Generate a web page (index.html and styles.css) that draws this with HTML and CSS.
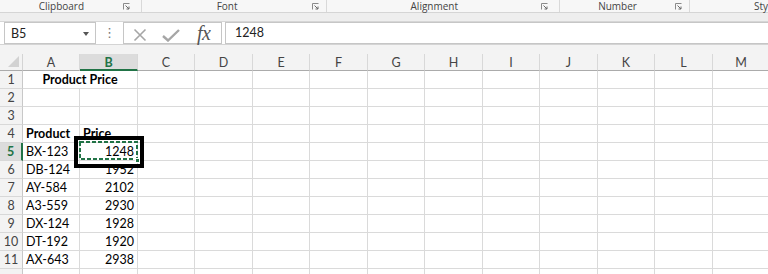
FILE: index.html
```html
<!DOCTYPE html>
<html>
<head>
<meta charset="utf-8">
<link rel="stylesheet" href="styles.css">
</head>
<body>
<div class="ribbon">
  <div class="grp g-clip"><span class="glabel">Clipboard</span><svg class="launch" width="7" height="7" viewBox="0 0 7 7"><path d="M0.5 6.5V0.5H6.5" fill="none" stroke="#8a8a8a"/><path d="M2.5 2.5L6 6M6 3.5V6H3.5" fill="none" stroke="#6a6a6a"/></svg></div>
  <div class="grp g-font"><span class="glabel">Font</span><svg class="launch" width="7" height="7" viewBox="0 0 7 7"><path d="M0.5 6.5V0.5H6.5" fill="none" stroke="#8a8a8a"/><path d="M2.5 2.5L6 6M6 3.5V6H3.5" fill="none" stroke="#6a6a6a"/></svg></div>
  <div class="grp g-align"><span class="glabel">Alignment</span><svg class="launch" width="7" height="7" viewBox="0 0 7 7"><path d="M0.5 6.5V0.5H6.5" fill="none" stroke="#8a8a8a"/><path d="M2.5 2.5L6 6M6 3.5V6H3.5" fill="none" stroke="#6a6a6a"/></svg></div>
  <div class="grp g-num"><span class="glabel">Number</span><svg class="launch" width="7" height="7" viewBox="0 0 7 7"><path d="M0.5 6.5V0.5H6.5" fill="none" stroke="#8a8a8a"/><path d="M2.5 2.5L6 6M6 3.5V6H3.5" fill="none" stroke="#6a6a6a"/></svg></div>
  <div class="grp g-sty"><span class="glabel">Sty</span></div>
</div>
<div class="band"></div>
<div class="fbar">
  <div class="namebox"><span class="nbtext">B5</span><span class="caret"></span></div>
  <div class="dots">⋮</div>
  <div class="fbtns">
    <svg class="ico-x" width="14" height="14" viewBox="0 0 14 14"><path d="M1.5 1.5L12.5 12.5M12.5 1.5L1.5 12.5" stroke="#a6a6a6" stroke-width="1.6" fill="none"/></svg>
    <svg class="ico-ok" width="18" height="13" viewBox="0 0 18 13"><path d="M1 7L6 11.5L17 1" stroke="#a6a6a6" stroke-width="2.4" fill="none"/></svg>
    <span class="fx">fx</span>
  </div>
  <div class="finput">1248</div>
</div>
<div class="gap"></div>
<div class="sheet">
  <div class="corner"><span class="tri"></span></div>
  <div class="ch">A</div><div class="ch sel">B</div><div class="ch">C</div><div class="ch">D</div><div class="ch">E</div><div class="ch">F</div><div class="ch">G</div><div class="ch">H</div><div class="ch">I</div><div class="ch">J</div><div class="ch">K</div><div class="ch">L</div><div class="ch">M</div>

  <div class="rh">1</div><div class="c merged b">Product Price</div><div class="c"></div><div class="c"></div><div class="c"></div><div class="c"></div><div class="c"></div><div class="c"></div><div class="c"></div><div class="c"></div><div class="c"></div><div class="c"></div><div class="c"></div>

  <div class="rh">2</div><div class="c"></div><div class="c"></div><div class="c"></div><div class="c"></div><div class="c"></div><div class="c"></div><div class="c"></div><div class="c"></div><div class="c"></div><div class="c"></div><div class="c"></div><div class="c"></div><div class="c"></div>

  <div class="rh">3</div><div class="c"></div><div class="c"></div><div class="c"></div><div class="c"></div><div class="c"></div><div class="c"></div><div class="c"></div><div class="c"></div><div class="c"></div><div class="c"></div><div class="c"></div><div class="c"></div><div class="c"></div>

  <div class="rh">4</div><div class="c b">Product</div><div class="c b">Price</div><div class="c"></div><div class="c"></div><div class="c"></div><div class="c"></div><div class="c"></div><div class="c"></div><div class="c"></div><div class="c"></div><div class="c"></div><div class="c"></div><div class="c"></div>

  <div class="rh sel">5</div><div class="c">BX-123</div><div class="c num active">1248<svg class="ants" width="60" height="20" viewBox="0 0 60 20"><rect x="1" y="1" width="57" height="17" fill="none" stroke="#217346" stroke-width="2" stroke-dasharray="4 2"/></svg><span class="handle"></span><span class="frame"></span></div><div class="c"></div><div class="c"></div><div class="c"></div><div class="c"></div><div class="c"></div><div class="c"></div><div class="c"></div><div class="c"></div><div class="c"></div><div class="c"></div><div class="c"></div>

  <div class="rh">6</div><div class="c">DB-124</div><div class="c num">1952</div><div class="c"></div><div class="c"></div><div class="c"></div><div class="c"></div><div class="c"></div><div class="c"></div><div class="c"></div><div class="c"></div><div class="c"></div><div class="c"></div><div class="c"></div>

  <div class="rh">7</div><div class="c">AY-584</div><div class="c num">2102</div><div class="c"></div><div class="c"></div><div class="c"></div><div class="c"></div><div class="c"></div><div class="c"></div><div class="c"></div><div class="c"></div><div class="c"></div><div class="c"></div><div class="c"></div>

  <div class="rh">8</div><div class="c">A3-559</div><div class="c num">2930</div><div class="c"></div><div class="c"></div><div class="c"></div><div class="c"></div><div class="c"></div><div class="c"></div><div class="c"></div><div class="c"></div><div class="c"></div><div class="c"></div><div class="c"></div>

  <div class="rh">9</div><div class="c">DX-124</div><div class="c num">1928</div><div class="c"></div><div class="c"></div><div class="c"></div><div class="c"></div><div class="c"></div><div class="c"></div><div class="c"></div><div class="c"></div><div class="c"></div><div class="c"></div><div class="c"></div>

  <div class="rh">10</div><div class="c">DT-192</div><div class="c num">1920</div><div class="c"></div><div class="c"></div><div class="c"></div><div class="c"></div><div class="c"></div><div class="c"></div><div class="c"></div><div class="c"></div><div class="c"></div><div class="c"></div><div class="c"></div>

  <div class="rh">11</div><div class="c">AX-643</div><div class="c num">2938</div><div class="c"></div><div class="c"></div><div class="c"></div><div class="c"></div><div class="c"></div><div class="c"></div><div class="c"></div><div class="c"></div><div class="c"></div><div class="c"></div><div class="c"></div>

  <div class="rh"></div><div class="c"></div><div class="c"></div><div class="c"></div><div class="c"></div><div class="c"></div><div class="c"></div><div class="c"></div><div class="c"></div><div class="c"></div><div class="c"></div><div class="c"></div><div class="c"></div><div class="c"></div>
</div>
</body>
</html>
```

FILE: styles.css
```css
* { box-sizing: border-box; }
html, body { margin: 0; padding: 0; }
body {
  width: 768px;
  height: 274px;
  overflow: hidden;
  background: #ffffff;
  font-family: "Open Sans", "Noto Sans", sans-serif;
}

/* ribbon group labels */
.ribbon {
  display: flex;
  height: 13px;
  background: #f7f7f7;
  border-bottom: 1px solid #d5d5d5;
  white-space: nowrap;
}
.grp {
  display: flex;
  align-items: flex-start;
  height: 12px;
  border-right: 1px solid #d9d9d9;
}
.glabel {
  flex: 1;
  text-align: center;
  font-size: 10px;
  line-height: 12px;
  color: #444444;
}
.launch { margin-top: 3px; margin-right: 7px; flex: none; }
.g-clip { width: 142px; padding-right: 4px; }
.g-font { width: 186px; }
.g-align { width: 233px; padding-right: 4px; }
.g-num { width: 130px; }
.g-sty { flex: 1; border-right: none; }
.g-sty .glabel { text-align: left; padding-left: 64px; }

.band {
  height: 9px;
  background: #eeeeee;
  border-bottom: 1px solid #d6d6d6;
}

/* formula bar */
.fbar {
  display: flex;
  align-items: stretch;
  height: 23px;
  background: #ffffff;
  border-bottom: 1px solid #d4d4d4;
}
.namebox {
  margin-left: 4px;
  width: 92px;
  height: 22px;
  border: 1px solid #c6c6c6;
  display: flex;
  align-items: center;
  justify-content: space-between;
  padding: 0 6px;
  font-family: "Lato", sans-serif;
  font-size: 12.5px;
  color: #222222;
}
.caret {
  width: 0; height: 0;
  border-left: 3.5px solid transparent;
  border-right: 3.5px solid transparent;
  border-top: 4px solid #555555;
  margin-top: 1px;
}
.dots {
  width: 27px;
  text-align: center;
  font-size: 13px;
  line-height: 22px;
  color: #777777;
  font-family: "DejaVu Sans", sans-serif;
}
.fbtns {
  width: 99px;
  height: 22px;
  border: 1px solid #c6c6c6;
  display: flex;
  align-items: center;
  padding-left: 9px;
}
.ico-x { margin-top: 3px; flex: none; }
.ico-ok { margin-left: 15px; margin-top: 4px; flex: none; }
.fx {
  margin-left: 17px;
  font-family: "Liberation Serif", serif;
  font-style: italic;
  font-size: 20px;
  line-height: 20px;
  color: #555555;
  letter-spacing: -0.5px;
}
.finput {
  margin-left: 3px;
  flex: 1;
  height: 22px;
  border: 1px solid #c6c6c6;
  border-right: none;
  padding-left: 9px;
  font-family: "Lato", sans-serif;
  font-size: 12.5px;
  line-height: 20px;
  color: #222222;
}
.gap {
  height: 9px;
  background: #f3f3f3;
}

/* sheet grid */
.sheet {
  display: grid;
  grid-template-columns: 23px 57px 58px 57px 58px 57px 58px 57px 58px 57px 58px 57px 58px 57px;
  grid-template-rows: 17px;
  grid-auto-rows: 18px;
  font-family: "Lato", sans-serif;
  font-size: 12.5px;
  color: #000000;
}
.corner {
  background: #f3f3f3;
  border-right: 1px solid #d4d4d4;
  border-bottom: 1px solid #ababab;
  position: relative;
}
.tri {
  position: absolute;
  right: 3px;
  bottom: 3px;
  width: 0; height: 0;
  border-left: 11px solid transparent;
  border-bottom: 11px solid #d2d2d2;
}
.ch {
  background: #f3f3f3;
  border-right: 1px solid #d8d8d8;
  border-bottom: 1px solid #ababab;
  text-align: center;
  line-height: 17px;
  color: #444444;
  font-size: 12.5px;
}
.ch.sel {
  background: #dcdcdc;
  border-bottom: 2px solid #217346;
  color: #217346;
  font-weight: bold;
}
.rh {
  background: #f3f3f3;
  border-right: 1px solid #c8c8c8;
  border-bottom: 1px solid #d8d8d8;
  text-align: center;
  line-height: 18px;
  color: #444444;
  font-size: 12.5px;
}
.rh.sel {
  background: #dcdcdc;
  border-right: 2px solid #217346;
  color: #217346;
  font-weight: bold;
}
.c {
  border-right: 1px solid #dadada;
  border-bottom: 1px solid #dadada;
  padding: 0 3px;
  line-height: 18px;
  white-space: nowrap;
}
.c.b { font-weight: bold; }
.c.merged { grid-column: span 2; text-align: center; }
.c.num { text-align: right; padding-right: 3px; }
.c.active { position: relative; }
.ants {
  position: absolute;
  left: -1px;
  top: -2px;
}
.handle {
  position: absolute;
  right: -3px;
  bottom: -3px;
  width: 5px;
  height: 5px;
  background: #217346;
  border: 1px solid #ffffff;
}
.frame {
  position: absolute;
  left: -6px;
  top: -7px;
  width: 70px;
  height: 32px;
  border: 4px solid #000000;
}
```
